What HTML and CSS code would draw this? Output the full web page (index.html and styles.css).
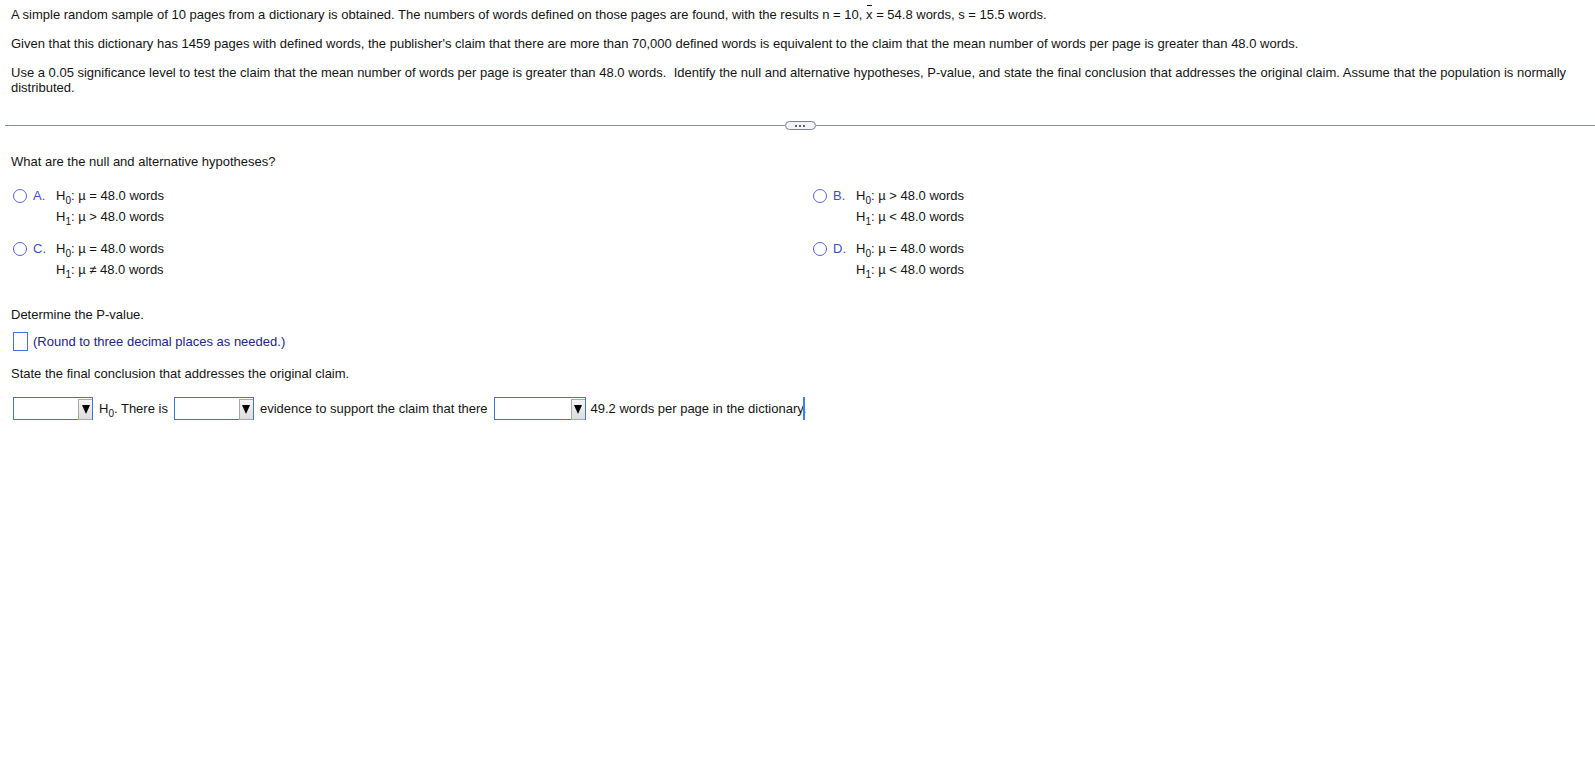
FILE: index.html
```html
<!DOCTYPE html>
<html>
<head>
<meta charset="utf-8">
<link rel="stylesheet" href="styles.css">
</head>
<body>
<div class="page">
  <div class="stem">
    <p class="para">A simple random sample of 10 pages from a dictionary is obtained. The numbers of words defined on those pages are found, with the results n = 10, <span class="xbar">x</span> = 54.8 words, s = 15.5 words.</p>
    <p class="para">Given that this dictionary has 1459 pages with defined words, the publisher's claim that there are more than 70,000 defined words is equivalent to the claim that the mean number of words per page is greater than 48.0 words.</p>
    <p class="para">Use a 0.05 significance level to test the claim that the mean number of words per page is greater than 48.0 words.&nbsp; Identify the null and alternative hypotheses, P-value, and state the final conclusion that addresses the original claim. Assume that the population is normally distributed.</p>
  </div>

  <div class="separator">
    <div class="sep-line"></div>
    <div class="sep-pill"><span class="dot"></span><span class="dot"></span><span class="dot"></span></div>
    <div class="sep-line"></div>
  </div>

  <div class="question">
    <p class="q-text">What are the null and alternative hypotheses?</p>
    <div class="options">
      <div class="option">
        <span class="radio"></span>
        <span class="opt-label">A.</span>
        <div class="hyp">
          <div class="hyp-line">H<span class="sub">0</span>: µ = 48.0 words</div>
          <div class="hyp-line">H<span class="sub">1</span>: µ &gt; 48.0 words</div>
        </div>
      </div>
      <div class="option">
        <span class="radio"></span>
        <span class="opt-label">B.</span>
        <div class="hyp">
          <div class="hyp-line">H<span class="sub">0</span>: µ &gt; 48.0 words</div>
          <div class="hyp-line">H<span class="sub">1</span>: µ &lt; 48.0 words</div>
        </div>
      </div>
      <div class="option">
        <span class="radio"></span>
        <span class="opt-label">C.</span>
        <div class="hyp">
          <div class="hyp-line">H<span class="sub">0</span>: µ = 48.0 words</div>
          <div class="hyp-line">H<span class="sub">1</span>: µ ≠ 48.0 words</div>
        </div>
      </div>
      <div class="option">
        <span class="radio"></span>
        <span class="opt-label">D.</span>
        <div class="hyp">
          <div class="hyp-line">H<span class="sub">0</span>: µ = 48.0 words</div>
          <div class="hyp-line">H<span class="sub">1</span>: µ &lt; 48.0 words</div>
        </div>
      </div>
    </div>

    <p class="q-text pval-title">Determine the P-value.</p>
    <div class="answer-row">
      <span class="answer-box"></span>
      <span class="hint">(Round to three decimal places as needed.)</span>
    </div>

    <p class="q-text state-title">State the final conclusion that addresses the original claim.</p>
    <div class="concl-row">
      <span class="dropdown w80"><span class="dd-btn"><span class="tri"></span></span></span>
      <span class="concl-text">H<span class="sub">0</span>. There is</span>
      <span class="dropdown w80"><span class="dd-btn"><span class="tri"></span></span></span>
      <span class="concl-text">evidence to support the claim that there</span>
      <span class="dropdown w92"><span class="dd-btn"><span class="tri"></span></span></span>
      <span class="concl-text tail">49.2 words per page in the dictionary.<span class="caret"></span></span>
    </div>
  </div>
</div>
</body>
</html>
```

FILE: styles.css
```css
html, body {
  margin: 0;
  padding: 0;
  background: #ffffff;
}

body {
  font-family: "Liberation Sans", Arial, sans-serif;
  font-size: 13px;
  line-height: 15px;
  color: #141414;
}

.page {
  padding-top: 7px;
}

.stem {
  padding-left: 11px;
  padding-right: 20px;
}

.para {
  margin: 0 0 14px 0;
}

.para:last-child {
  margin-bottom: 0;
}

.xbar {
  position: relative;
  display: inline-block;
}

.xbar::before {
  content: "";
  position: absolute;
  left: 1px;
  right: 1px;
  top: -2px;
  height: 1px;
  background: #141414;
}

/* separator */
.separator {
  display: flex;
  align-items: center;
  margin: 26px 0 0 5px;
  height: 9px;
}

.sep-line {
  flex: 1;
  height: 1px;
  background: #8a8f99;
}

.sep-pill {
  width: 29px;
  height: 7px;
  border: 1px solid #7a8291;
  border-radius: 5px;
  background: #f1f3f6;
  display: flex;
  align-items: center;
  justify-content: center;
  gap: 2px;
}

.dot {
  width: 2px;
  height: 2px;
  background: #5b616b;
}

/* question */
.question {
  padding-left: 11px;
}

.q-text {
  margin: 0;
}

.question > .q-text:first-child {
  margin-top: 24px;
}

.options {
  display: grid;
  grid-template-columns: 800px 1fr;
  row-gap: 11px;
  margin-top: 16px;
  margin-left: 2px;
}

.option {
  display: flex;
  align-items: flex-start;
}

.radio {
  width: 12px;
  height: 12px;
  border: 1px solid #5266cf;
  border-radius: 50%;
  margin-top: 4px;
  margin-right: 6px;
  flex: none;
}

.opt-label {
  width: 23px;
  line-height: 21px;
  color: #3f4fb5;
  flex: none;
}

.hyp-line {
  line-height: 21px;
  white-space: nowrap;
}

.sub {
  font-size: 10px;
  line-height: 0;
  vertical-align: -4px;
}

.pval-title {
  margin-top: 27px;
}

.answer-row {
  display: flex;
  align-items: center;
  margin-top: 10px;
  margin-left: 2px;
}

.answer-box {
  width: 13px;
  height: 17px;
  border: 1px solid #3f74d6;
  margin-right: 5px;
}

.hint {
  color: #24248a;
}

.state-title {
  margin-top: 15px;
}

.concl-row {
  display: flex;
  align-items: center;
  margin-top: 16px;
  margin-left: 2px;
  white-space: nowrap;
}

.dropdown {
  height: 21px;
  border: 1px solid #3f74d6;
  display: flex;
  justify-content: flex-end;
  align-items: flex-start;
  background: #ffffff;
  flex: none;
}

.w80 {
  width: 78px;
}

.w92 {
  width: 90px;
}

.dd-btn {
  width: 13px;
  height: 19px;
  margin-top: 1px;
  border: 1px solid #a9a9a9;
  border-right: none;
  background: linear-gradient(#f6f6f6, #dcdcdc);
  display: flex;
  align-items: center;
  justify-content: center;
}

.tri {
  width: 0;
  height: 0;
  border-left: 4px solid transparent;
  border-right: 4px solid transparent;
  border-top: 9px solid #000000;
}

.concl-text {
  margin: 0 6px 0 6px;
}

.concl-text.tail {
  margin-left: 5px;
  display: inline-flex;
  align-items: center;
}

.caret {
  display: inline-block;
  width: 2px;
  height: 23px;
  background: #3b7ff0;
  margin-left: -3px;
}
```
